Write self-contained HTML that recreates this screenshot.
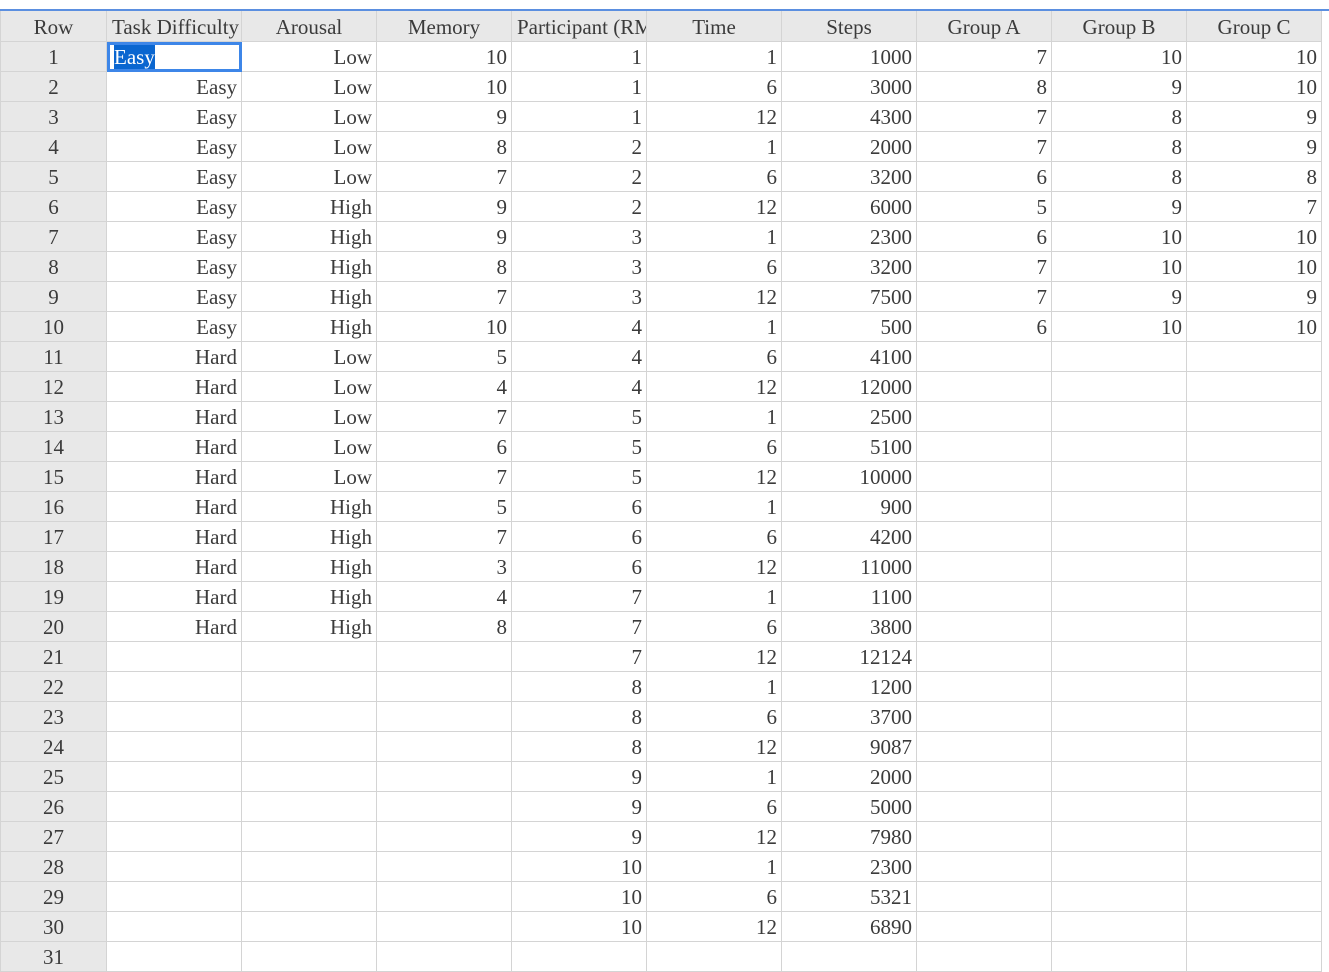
<!DOCTYPE html>
<html><head><style>
*{margin:0;padding:0;box-sizing:border-box}
body{width:1329px;height:960px;overflow:hidden;background:#fff;font-family:"Liberation Serif","Times New Roman",serif;font-size:21px;color:#3b3b3b}
.bar{position:absolute;top:9px;left:0;width:1329px;height:2px;background:#5b8fe0}
.g{position:absolute;top:11px;left:0}
.r{display:flex;height:30px}
.r div{width:135px;height:30px;border-right:1px solid #d4d4d4;border-bottom:1px solid #d4d4d4;text-align:right;padding-right:4px;line-height:31px;white-space:nowrap;overflow:hidden}
.r div:first-child{width:107px;background:#e8e8e8;text-align:center;padding:0;border-left:1px solid #d4d4d4}
.h div{background:#e8e8e8;text-align:center;padding:0;line-height:32px}
.h{height:31px}.h div{height:31px}
.sel{outline:3px solid #3d86e8;outline-offset:-3px;text-align:left!important;padding-left:7px!important}
.sel span{background:#0a66d0;color:#fff}
</style></head><body>
<div class="bar"></div>
<div class="g">
<div class="r h"><div>Row</div><div style="text-align:left;padding-left:5px">Task Difficulty</div><div>Arousal</div><div>Memory</div><div style="text-align:left;padding-left:5px">Participant (RM</div><div>Time</div><div>Steps</div><div>Group A</div><div>Group B</div><div>Group C</div></div>
<div class="r"><div>1</div><div class="sel"><span>Easy</span></div><div>Low</div><div>10</div><div>1</div><div>1</div><div>1000</div><div>7</div><div>10</div><div>10</div></div>
<div class="r"><div>2</div><div>Easy</div><div>Low</div><div>10</div><div>1</div><div>6</div><div>3000</div><div>8</div><div>9</div><div>10</div></div>
<div class="r"><div>3</div><div>Easy</div><div>Low</div><div>9</div><div>1</div><div>12</div><div>4300</div><div>7</div><div>8</div><div>9</div></div>
<div class="r"><div>4</div><div>Easy</div><div>Low</div><div>8</div><div>2</div><div>1</div><div>2000</div><div>7</div><div>8</div><div>9</div></div>
<div class="r"><div>5</div><div>Easy</div><div>Low</div><div>7</div><div>2</div><div>6</div><div>3200</div><div>6</div><div>8</div><div>8</div></div>
<div class="r"><div>6</div><div>Easy</div><div>High</div><div>9</div><div>2</div><div>12</div><div>6000</div><div>5</div><div>9</div><div>7</div></div>
<div class="r"><div>7</div><div>Easy</div><div>High</div><div>9</div><div>3</div><div>1</div><div>2300</div><div>6</div><div>10</div><div>10</div></div>
<div class="r"><div>8</div><div>Easy</div><div>High</div><div>8</div><div>3</div><div>6</div><div>3200</div><div>7</div><div>10</div><div>10</div></div>
<div class="r"><div>9</div><div>Easy</div><div>High</div><div>7</div><div>3</div><div>12</div><div>7500</div><div>7</div><div>9</div><div>9</div></div>
<div class="r"><div>10</div><div>Easy</div><div>High</div><div>10</div><div>4</div><div>1</div><div>500</div><div>6</div><div>10</div><div>10</div></div>
<div class="r"><div>11</div><div>Hard</div><div>Low</div><div>5</div><div>4</div><div>6</div><div>4100</div><div></div><div></div><div></div></div>
<div class="r"><div>12</div><div>Hard</div><div>Low</div><div>4</div><div>4</div><div>12</div><div>12000</div><div></div><div></div><div></div></div>
<div class="r"><div>13</div><div>Hard</div><div>Low</div><div>7</div><div>5</div><div>1</div><div>2500</div><div></div><div></div><div></div></div>
<div class="r"><div>14</div><div>Hard</div><div>Low</div><div>6</div><div>5</div><div>6</div><div>5100</div><div></div><div></div><div></div></div>
<div class="r"><div>15</div><div>Hard</div><div>Low</div><div>7</div><div>5</div><div>12</div><div>10000</div><div></div><div></div><div></div></div>
<div class="r"><div>16</div><div>Hard</div><div>High</div><div>5</div><div>6</div><div>1</div><div>900</div><div></div><div></div><div></div></div>
<div class="r"><div>17</div><div>Hard</div><div>High</div><div>7</div><div>6</div><div>6</div><div>4200</div><div></div><div></div><div></div></div>
<div class="r"><div>18</div><div>Hard</div><div>High</div><div>3</div><div>6</div><div>12</div><div>11000</div><div></div><div></div><div></div></div>
<div class="r"><div>19</div><div>Hard</div><div>High</div><div>4</div><div>7</div><div>1</div><div>1100</div><div></div><div></div><div></div></div>
<div class="r"><div>20</div><div>Hard</div><div>High</div><div>8</div><div>7</div><div>6</div><div>3800</div><div></div><div></div><div></div></div>
<div class="r"><div>21</div><div></div><div></div><div></div><div>7</div><div>12</div><div>12124</div><div></div><div></div><div></div></div>
<div class="r"><div>22</div><div></div><div></div><div></div><div>8</div><div>1</div><div>1200</div><div></div><div></div><div></div></div>
<div class="r"><div>23</div><div></div><div></div><div></div><div>8</div><div>6</div><div>3700</div><div></div><div></div><div></div></div>
<div class="r"><div>24</div><div></div><div></div><div></div><div>8</div><div>12</div><div>9087</div><div></div><div></div><div></div></div>
<div class="r"><div>25</div><div></div><div></div><div></div><div>9</div><div>1</div><div>2000</div><div></div><div></div><div></div></div>
<div class="r"><div>26</div><div></div><div></div><div></div><div>9</div><div>6</div><div>5000</div><div></div><div></div><div></div></div>
<div class="r"><div>27</div><div></div><div></div><div></div><div>9</div><div>12</div><div>7980</div><div></div><div></div><div></div></div>
<div class="r"><div>28</div><div></div><div></div><div></div><div>10</div><div>1</div><div>2300</div><div></div><div></div><div></div></div>
<div class="r"><div>29</div><div></div><div></div><div></div><div>10</div><div>6</div><div>5321</div><div></div><div></div><div></div></div>
<div class="r"><div>30</div><div></div><div></div><div></div><div>10</div><div>12</div><div>6890</div><div></div><div></div><div></div></div>
<div class="r"><div>31</div><div></div><div></div><div></div><div></div><div></div><div></div><div></div><div></div><div></div></div>
</div>
</body></html>
